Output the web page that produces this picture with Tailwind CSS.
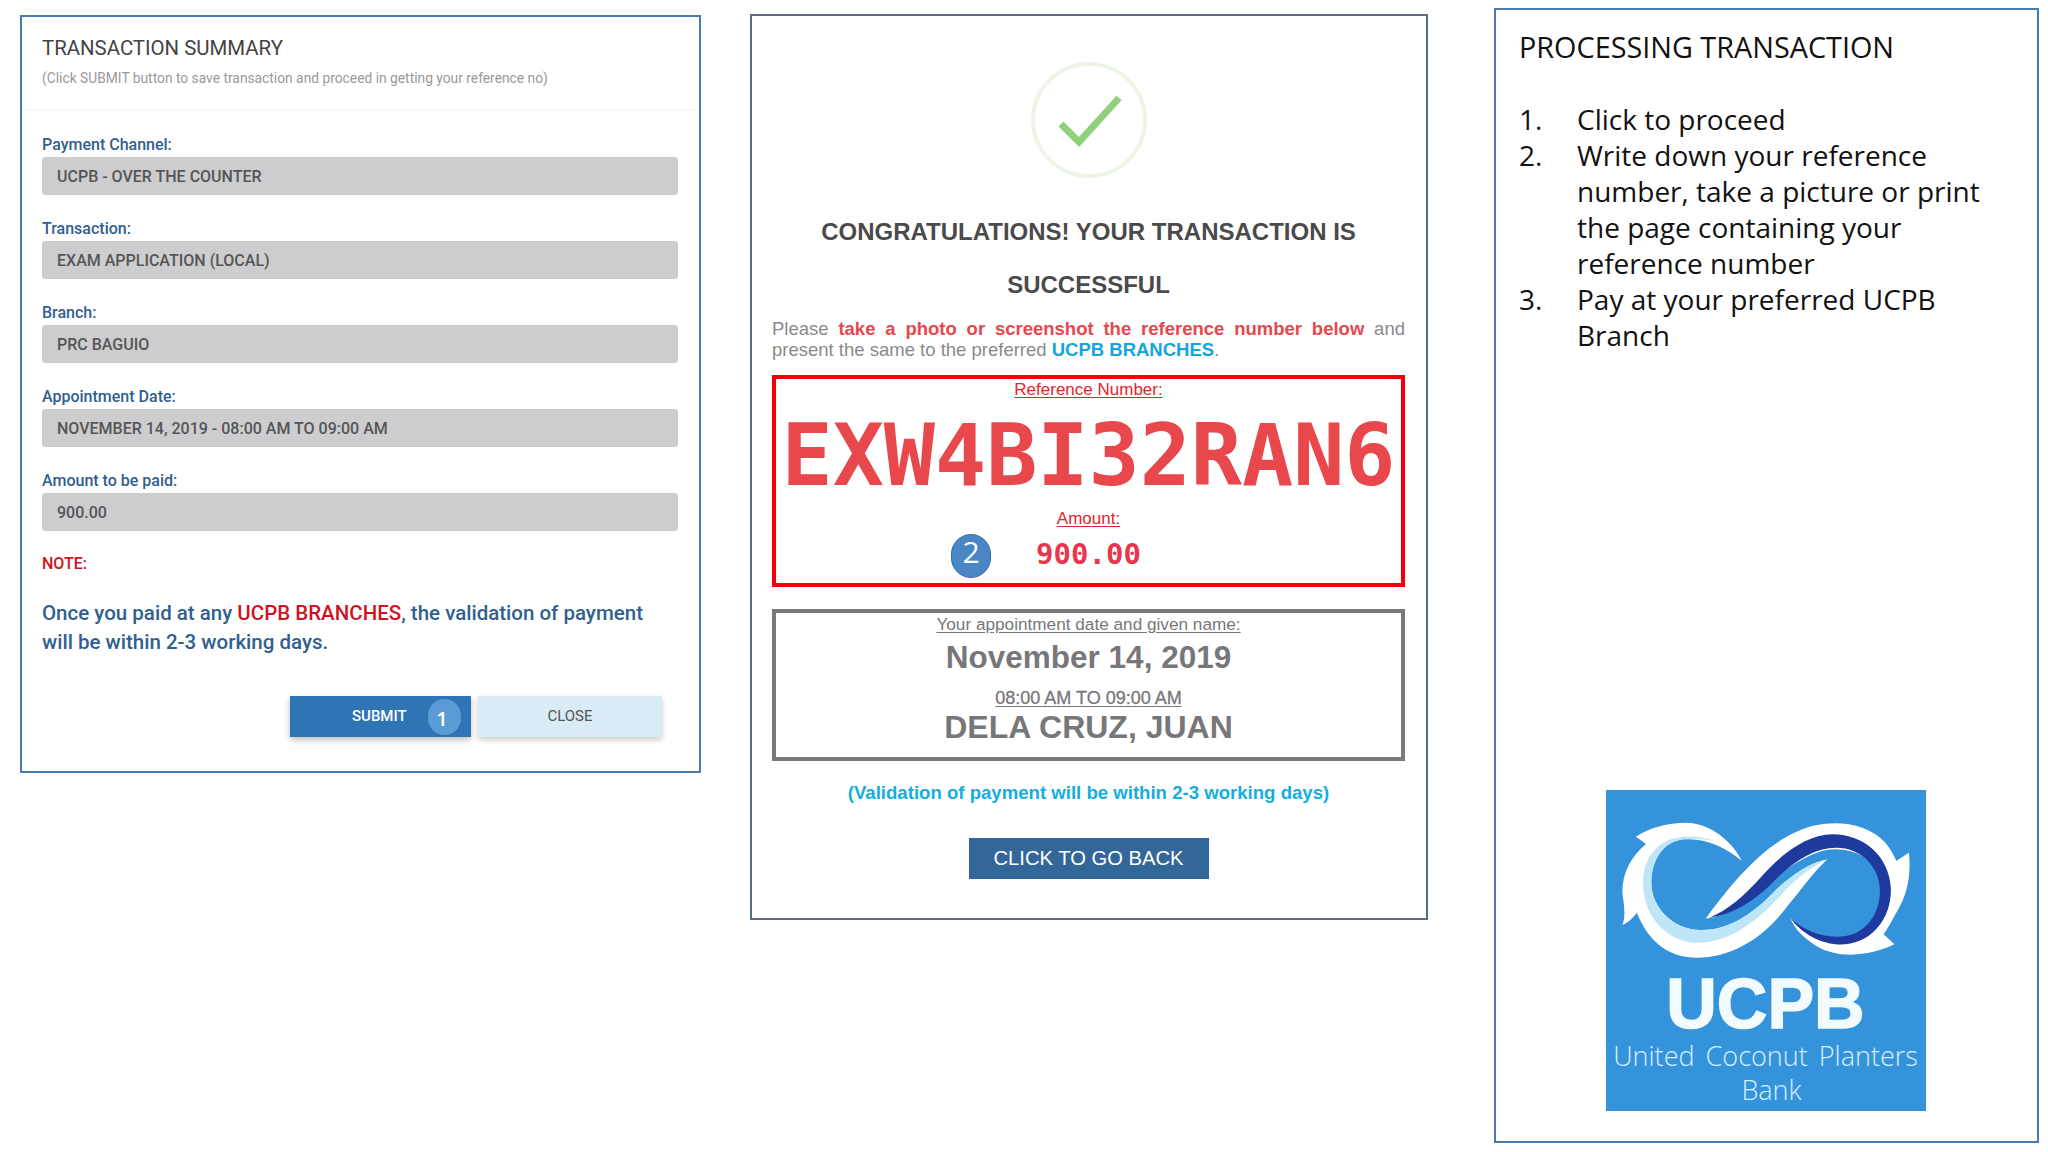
<!DOCTYPE html>
<html lang="en">
<head>
  <meta charset="UTF-8" />
  <title>Processing Transaction</title>
  <script src="https://cdn.jsdelivr.net/npm/@tailwindcss/browser@4"></script>
</head>
<body class="bg-white">
  <div class="w-[2048px] h-[1152px] flex items-start pl-[20px] overflow-hidden">

    <!-- Transaction summary -->
    <div class="w-[681px] h-[758px] mt-[15px] border-2 border-[#4a7bb0] font-['Roboto',sans-serif]">
      <div class="h-[93px] pt-[17px] px-[20px] border-b border-[#f4f4f4]">
        <h2 class="text-[20.4px] leading-[28px] text-[#444]">TRANSACTION SUMMARY</h2>
        <p class="mt-[6px] text-[13.8px] leading-[20px] text-[#999]">(Click SUBMIT button to save transaction and proceed in getting your reference no)</p>
      </div>
      <div class="pt-[21px] px-[20px]">
        <div class="flex flex-col gap-[20px]">
          <div>
            <div class="h-[26px] pt-[2px] text-[16px] leading-[24px] font-medium text-[#2f6090]">Payment Channel:</div>
            <div class="h-[38px] w-[636px] rounded-[3px] bg-[#cdcdcf] pt-[2px] px-[15px] text-[16px] leading-[36px] font-medium text-[#555]">UCPB - OVER THE COUNTER</div>
          </div>
          <div>
            <div class="h-[26px] pt-[2px] text-[16px] leading-[24px] font-medium text-[#2f6090]">Transaction:</div>
            <div class="h-[38px] w-[636px] rounded-[3px] bg-[#cdcdcf] pt-[2px] px-[15px] text-[16px] leading-[36px] font-medium text-[#555]">EXAM APPLICATION (LOCAL)</div>
          </div>
          <div>
            <div class="h-[26px] pt-[2px] text-[16px] leading-[24px] font-medium text-[#2f6090]">Branch:</div>
            <div class="h-[38px] w-[636px] rounded-[3px] bg-[#cdcdcf] pt-[2px] px-[15px] text-[16px] leading-[36px] font-medium text-[#555]">PRC BAGUIO</div>
          </div>
          <div>
            <div class="h-[26px] pt-[2px] text-[16px] leading-[24px] font-medium text-[#2f6090]">Appointment Date:</div>
            <div class="h-[38px] w-[636px] rounded-[3px] bg-[#cdcdcf] pt-[2px] px-[15px] text-[16px] leading-[36px] font-medium text-[#555]">NOVEMBER 14, 2019 - 08:00 AM TO 09:00 AM</div>
          </div>
          <div>
            <div class="h-[26px] pt-[2px] text-[16px] leading-[24px] font-medium text-[#2f6090]">Amount to be paid:</div>
            <div class="h-[38px] w-[636px] rounded-[3px] bg-[#cdcdcf] pt-[2px] px-[15px] text-[16px] leading-[36px] font-medium text-[#555]">900.00</div>
          </div>
        </div>
        <div class="mt-[22px] text-[16px] leading-[22px] font-medium text-[#d0121f]">NOTE:</div>
        <p class="mt-[24px] pr-[30px] text-[20.5px] leading-[28.5px] font-medium text-[#2f6090]">Once you paid at any <span class="text-[#d0121f]">UCPB BRANCHES</span>, the validation of payment will be within 2-3 working days.</p>
        <div class="mt-[40px] flex justify-end gap-[7px] pr-[17px]">
          <div class="relative w-[181px] h-[41px] bg-[#2f74b5] shadow-[0_3px_6px_rgba(0,0,0,0.25)] text-white text-[15px] font-medium leading-[41px] pl-[62px]">
            SUBMIT
            <span class="absolute left-[138px] top-[3px] w-[33px] h-[36px] rounded-full bg-[#5b9bd5] pr-[5px] text-center text-[20px] leading-[40px] font-semibold font-['Open_Sans',sans-serif]">1</span>
          </div>
          <div class="w-[184px] h-[41px] bg-[#d9ebf5] shadow-[0_3px_6px_rgba(0,0,0,0.2)] text-center text-[#555] text-[15px] leading-[41px]">CLOSE</div>
        </div>
      </div>
    </div>

    <!-- Success page -->
    <div class="w-[678px] h-[906px] mt-[14px] ml-[49px] border-2 border-[#5b6b80] pt-[46px] pl-[20px] pr-[21px] font-['Liberation_Sans',sans-serif] text-center">
      <svg class="mx-auto w-[116px] h-[116px]" viewBox="0 0 116 116" fill="none">
        <circle cx="58" cy="58" r="56" stroke="#edf6e6" stroke-width="4" />
        <path d="M30 62 L48 80 L88 36" stroke="#8fd07a" stroke-width="7" stroke-linejoin="miter" />
      </svg>
      <h2 class="mt-[27px] text-[24px] leading-[53px] font-bold text-[#4a4a4a]">CONGRATULATIONS! YOUR TRANSACTION IS SUCCESSFUL</h2>
      <p class="mt-[7px] text-[18.5px] leading-[21px] text-[#8a8a8a] text-justify">Please <b class="text-[#e8474c]">take a photo or screenshot the reference number below</b> and present the same to the preferred <b class="text-[#13a5dc]">UCPB BRANCHES</b>.</p>

      <div class="mt-[15px] h-[212px] border-4 border-[#f5000a] pt-px">
        <div class="text-[17px] leading-[20px] text-[#e8222c]"><span class="underline underline-offset-2">Reference Number:</span></div>
        <div class="mt-[11px] h-[90px] font-['DejaVu_Sans_Mono',monospace] text-[85px] leading-[90px] font-bold text-[#e8474c]">EXW4BI32RAN6</div>
        <div class="mt-[8px] text-[17px] leading-[20px] text-[#e8222c]"><span class="underline underline-offset-2">Amount:</span></div>
        <div class="relative mt-[7px] h-[36px] font-['DejaVu_Sans_Mono',monospace] text-[29px] leading-[36px] font-bold text-[#e8364c]">
          900.00
          <span class="absolute left-[175px] top-[-2px] w-[40px] h-[44px] rounded-full bg-[#4a86c5] border border-[#3a6ea5] text-white text-[30px] leading-[34px] font-['Open_Sans',sans-serif] font-normal">2</span>
        </div>
      </div>

      <div class="mt-[22px] h-[152px] border-4 border-[#7a7a7c] pt-px text-[#77777a]">
        <div class="text-[17.2px] leading-[20px]"><span class="underline underline-offset-2">Your appointment date and given name:</span></div>
        <div class="mt-[5px] text-[31.5px] leading-[36px] font-bold">November 14, 2019</div>
        <div class="mt-[13px] text-[18px] leading-[20px] font-medium [-webkit-text-stroke:0.3px_#77777a]"><span class="underline underline-offset-2">08:00 AM TO 09:00 AM</span></div>
        <div class="mt-[1px] text-[32px] leading-[36px] font-bold">DELA CRUZ, JUAN</div>
      </div>

      <div class="mt-[20px] text-[18.6px] leading-[24px] font-bold text-[#13aee0]">(Validation of payment will be within 2-3 working days)</div>
      <div class="mt-[33px] mx-auto w-[240px] h-[41px] bg-[#336699] text-white text-[20.2px] leading-[41px]">CLICK TO GO BACK</div>
    </div>

    <!-- Steps -->
    <div class="w-[545px] h-[1135px] mt-[8px] ml-[66px] border-2 border-[#4a7bb0] pt-[17px] pb-[30px] pl-[23px] pr-[25px] flex flex-col font-['Open_Sans',sans-serif] text-[#111]">
      <h2 class="text-[28.8px] leading-[40px]">PROCESSING TRANSACTION</h2>
      <ol class="mt-[34px] text-[28px] leading-[36px]">
        <li class="flex"><span class="w-[58px] shrink-0">1.</span><span>Click to proceed</span></li>
        <li class="flex"><span class="w-[58px] shrink-0">2.</span><span>Write down your reference number, take a picture or print the page containing your reference number</span></li>
        <li class="flex"><span class="w-[58px] shrink-0">3.</span><span>Pay at your preferred UCPB Branch</span></li>
      </ol>

      <!-- UCPB logo -->
      <div class="mt-auto mx-auto w-[320px] h-[321px] bg-[#3593dc] flex flex-col items-center text-center">
        <svg class="w-[320px] h-[178px] shrink-0" viewBox="350 92 882 534" preserveAspectRatio="none">
          <path fill="#fff" d="M432 232 C470 205 520 190 570 190 C640 190 700 250 725 305 C680 262 620 235 565 240 C510 245 475 300 475 370 C475 440 530 510 610 512 C690 515 760 460 820 390 C860 350 910 310 960 300 C920 340 890 390 850 440 C790 530 700 595 600 595 C530 595 470 555 435 460 C425 475 410 490 395 497 C405 470 400 440 395 400 C395 340 420 290 460 255 C450 245 440 238 432 232Z" />
          <path fill="#bfe6f7" d="M650 245 C600 225 530 225 490 265 C450 305 445 370 460 430 C480 500 540 555 610 550 C700 545 770 480 830 410 C870 360 920 320 960 300 C910 310 860 350 820 390 C760 460 690 515 610 512 C530 510 475 440 475 370 C475 300 510 245 565 240 C595 237 625 240 650 245Z" />
          <path fill="#fff" d="M625 478 C690 380 780 260 880 215 C950 180 1060 180 1120 250 C1135 270 1145 290 1150 305 L1185 280 C1190 340 1185 400 1150 460 C1135 490 1125 510 1115 525 L1145 555 C1080 590 990 600 930 560 C895 535 870 510 858 475 C890 520 950 550 1010 545 C1080 540 1115 470 1110 390 C1105 310 1050 270 980 270 C900 270 800 370 720 440 C690 460 650 475 625 478Z" />
          <path fill="#1f3a9e" d="M635 475 C690 450 730 410 780 350 C830 290 900 225 975 225 C1060 225 1130 290 1135 385 C1138 470 1090 545 1010 555 C950 560 890 525 858 475 C890 510 950 540 1010 530 C1070 520 1105 460 1105 395 C1105 320 1050 265 985 265 C920 265 860 310 800 380 C750 430 700 465 635 475Z" />
        </svg>
        <div class="mt-[5px] font-['Liberation_Sans',sans-serif] font-bold text-[70px] leading-[62px] text-[#f2fbff] [-webkit-text-stroke:1.5px_#f2fbff]">UCPB</div>
        <div class="text-[27px] leading-[34px] font-light text-[#d5f1fb] whitespace-nowrap [word-spacing:4px] mt-[4px]">United Coconut Planters</div>
        <div class="pl-[12px] text-[27px] leading-[34px] font-light text-[#d5f1fb]">Bank</div>
      </div>
    </div>
  </div>
</body>
</html>
